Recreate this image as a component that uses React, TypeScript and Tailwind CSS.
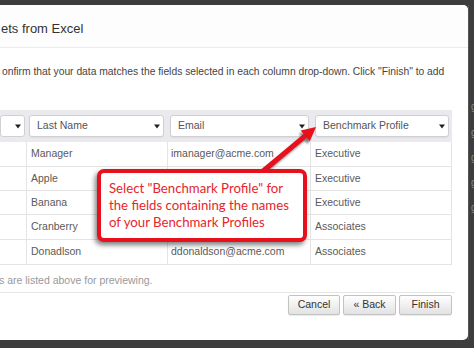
import React from "react";

const rows = [
  { last: "Manager", email: "imanager@acme.com", prof: "Executive", h: "h-[25px]" },
  { last: "Apple", email: "", prof: "Executive", h: "h-[24px]" },
  { last: "Banana", email: "", prof: "Executive", h: "h-[24px]" },
  { last: "Cranberry", email: "", prof: "Associates", h: "h-[25px]" },
  { last: "Donadlson", email: "ddonaldson@acme.com", prof: "Associates", h: "h-[25px]" },
];

function Caret() {
  return (
    <svg width="6" height="5" viewBox="0 0 6 5" className="shrink-0">
      <path d="M0 0.5 L6 0.5 L3 4.5 Z" fill="#222" />
    </svg>
  );
}

function Select({ label, cls }: { label: string; cls: string }) {
  return (
    <div
      className={
        "h-[22px] bg-white border border-[#cfcfd4] rounded-[3px] flex items-center justify-between pl-[7px] pr-[3px] text-[10.5px] text-[#555] shadow-[0_1px_1px_rgba(0,0,0,0.06)] " +
        cls
      }
    >
      <span className="whitespace-nowrap">{label}</span>
      <Caret />
    </div>
  );
}

function Btn({ label, w }: { label: string; w: string }) {
  return (
    <div
      className={
        "h-[20px] flex items-center justify-center border border-[#c2c2c2] rounded-[2px] bg-gradient-to-b from-white to-[#e2e2e2] text-[10.5px] text-[#333] shadow-[0_1px_1px_rgba(0,0,0,0.08)] " +
        w
      }
    >
      {label}
    </div>
  );
}

export default function App() {
  return (
    <div className="relative w-[474px] h-[348px] overflow-hidden bg-[#3d3d3d] font-['Liberation_Sans',Arial,sans-serif]">
      <div className="flex pt-[5px] h-[340px]">
        <div className="w-[468px] h-[335px] bg-white rounded-r-[5px] overflow-hidden flex flex-col">
          {/* header */}
          <div className="h-[43px] shrink-0 border-b border-[#ececec] bg-[#fdfdfd] pt-[16px] pl-[1px] text-[13px] leading-[16px] text-[#333] whitespace-nowrap">
            ets from Excel
          </div>
          {/* instructions */}
          <div className="mt-[17px] pl-[2px] text-[10.3px] leading-[14px] text-[#444] whitespace-nowrap">
            onfirm that your data matches the fields selected in each column drop-down. Click "Finish" to add
          </div>
          {/* table */}
          <div className="mt-[31px] w-[452px]">
            <div className="h-[32px] bg-[#e9e9ee] grid grid-cols-[27px_141px_143px_141px] items-center">
              <div className="flex justify-end pr-[2px] overflow-hidden">
                <div className="h-[22px] w-[30px] bg-white border border-[#cfcfd4] rounded-[3px] flex items-center justify-end pr-[3px]">
                  <Caret />
                </div>
              </div>
              <div className="pl-[2px]">
                <Select label="Last Name" cls="w-[135px]" />
              </div>
              <div className="pl-[2px]">
                <Select label="Email" cls="w-[139px]" />
              </div>
              <div className="pl-[4px]">
                <Select label="Benchmark Profile" cls="w-[134px]" />
              </div>
            </div>
            {rows.map((r) => (
              <div
                key={r.last}
                className={
                  "grid grid-cols-[27px_141px_143px_141px] border-b border-[#e4e4e4] text-[10.5px] text-[#5a5a5a] " + r.h
                }
              >
                <div className="border-r border-[#e4e4e4]" />
                <div className="border-r border-[#e4e4e4] pl-[4px] flex items-center whitespace-nowrap">{r.last}</div>
                <div className="border-r border-[#e4e4e4] pl-[3px] flex items-center whitespace-nowrap">{r.email}</div>
                <div className="border-r border-[#e4e4e4] pl-[4px] flex items-center whitespace-nowrap">{r.prof}</div>
              </div>
            ))}
          </div>
          {/* note */}
          <div className="mt-[8px] ml-[-1px] text-[10.5px] leading-[14px] text-[#999] whitespace-nowrap">
            s are listed above for previewing.
          </div>
          <div className="mt-[5px] w-[455px] border-t border-[#e6e6e6]" />
          <div className="mt-[2px] w-[452px] flex justify-end gap-[3px]">
            <Btn label="Cancel" w="w-[52px]" />
            <Btn label="« Back" w="w-[53px]" />
            <Btn label="Finish" w="w-[53px]" />
          </div>
        </div>
        {/* background strip */}
        <div className="w-[6px] flex flex-col overflow-hidden border-l border-[#555] text-[10px] leading-[12px] text-[#8a8a8a] pl-[2px]">
          <div className="mt-[96px]">g</div>
          <div className="mt-[14px]">g</div>
          <div className="mt-[13px]">g</div>
          <div className="mt-[13px]">g</div>
          <div className="mt-[13px]">g</div>
        </div>
      </div>

      {/* arrow */}
      <svg className="absolute left-0 top-0 pointer-events-none" width="474" height="348" viewBox="0 0 474 348">
        <defs>
          <filter id="sh" x="-20%" y="-20%" width="140%" height="140%">
            <feGaussianBlur stdDeviation="1.2" />
          </filter>
        </defs>
        <polygon
          transform="translate(-2 3)"
          filter="url(#sh)"
          fill="rgba(0,0,0,0.45)"
          points="260.4,170.1 303.6,134.0 300.7,130.5 316,127 309.7,141.3 306.8,137.8 263.6,173.9"
        />
        <polygon
          fill="#e8101c"
          points="260.4,170.1 303.6,134.0 300.7,130.5 316,127 309.7,141.3 306.8,137.8 263.6,173.9"
        />
      </svg>

      {/* callout */}
      <div className="absolute left-[97px] top-[169px] w-[210px] h-[73px] border-[4px] border-[#e8101c] rounded-[7px] bg-white shadow-[-2px_3px_5px_rgba(0,0,0,0.5)] flex items-center pl-[8px] font-['Lato',sans-serif] text-[13.2px] leading-[17px] text-[#e5262d]">
        <div>
          <div className="whitespace-nowrap">Select "Benchmark Profile" for</div>
          <div className="whitespace-nowrap">the fields containing the names</div>
          <div className="whitespace-nowrap">of your Benchmark Profiles</div>
        </div>
      </div>
    </div>
  );
}
